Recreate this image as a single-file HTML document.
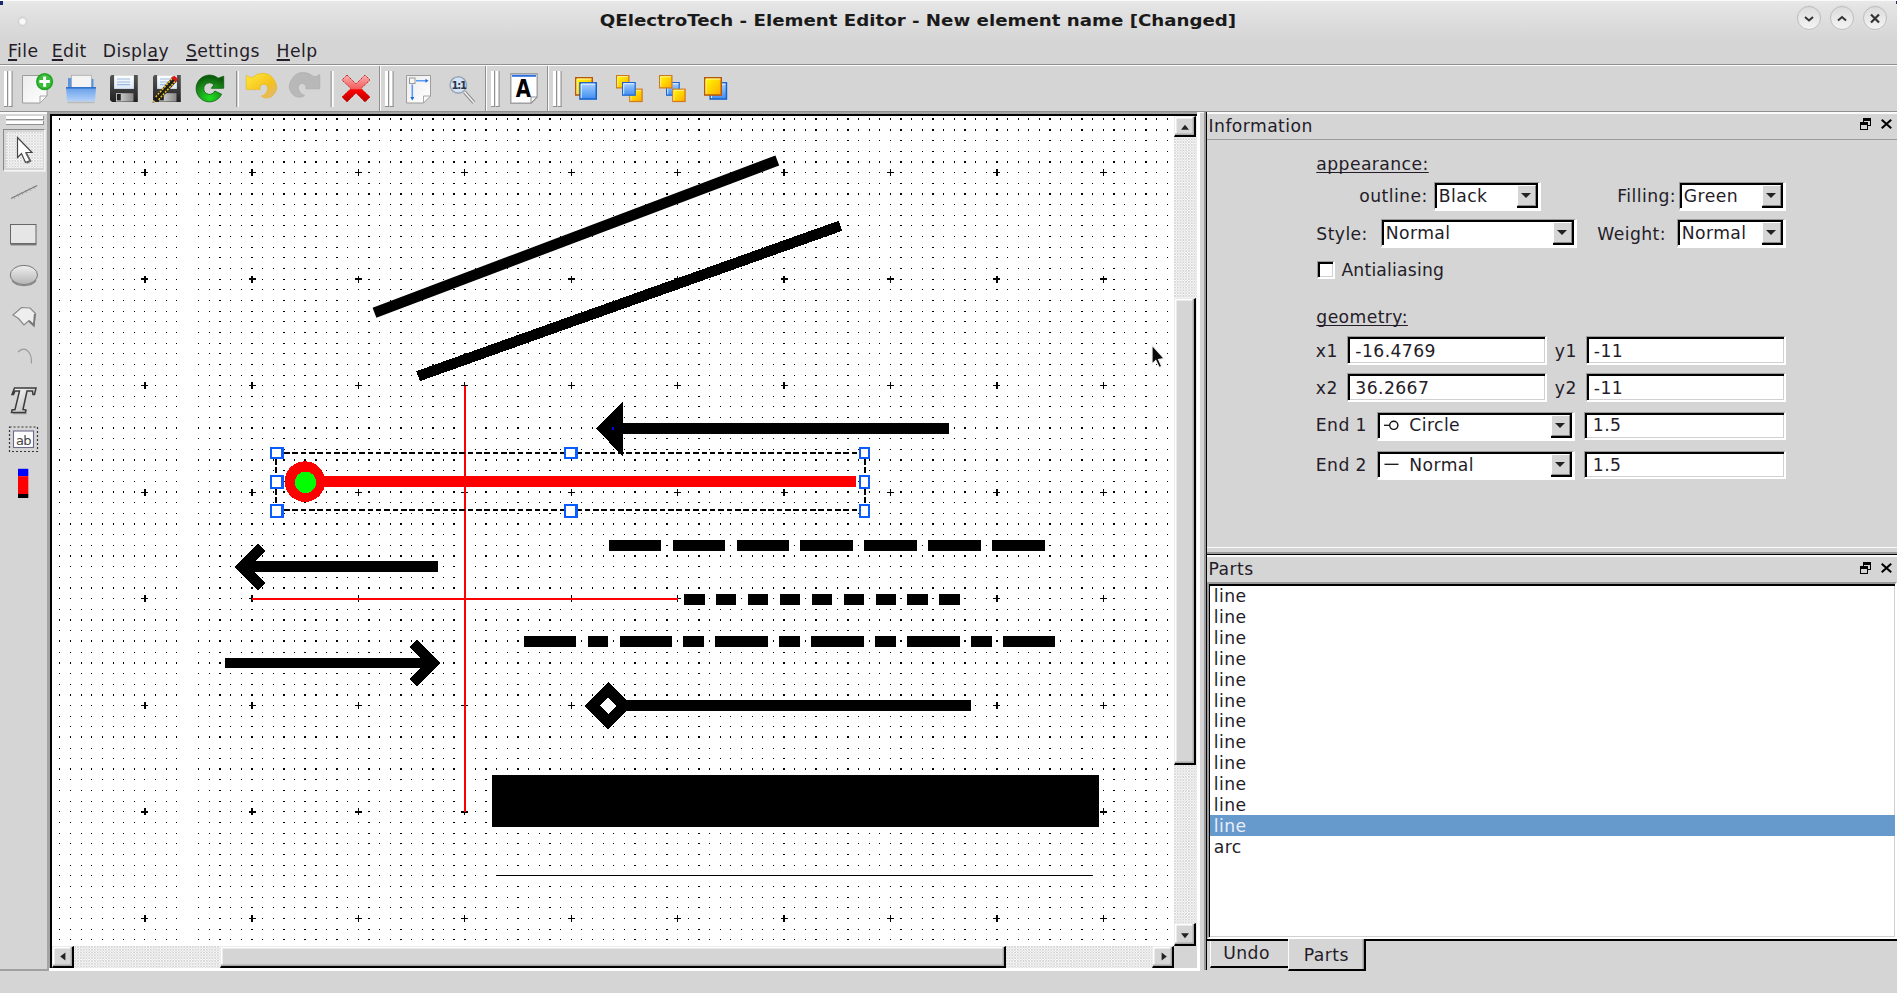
<!DOCTYPE html>
<html lang="en">
<head>
<meta charset="utf-8">
<title>QElectroTech - Element Editor - New element name [Changed]</title>
<style>
html,body{margin:0;padding:0;}
body{width:1899px;height:993px;overflow:hidden;background:#d5d5d5;position:relative;
 font-family:"DejaVu Sans","Liberation Sans",sans-serif;font-size:17.2px;letter-spacing:0.42px;color:#241c28;}
.abs{position:absolute;}
.t{position:absolute;white-space:nowrap;line-height:20px;}
u{text-decoration:underline;text-underline-offset:2.2px;text-decoration-thickness:1.7px;text-decoration-skip-ink:none;}
#titlebar{left:0;top:0;width:1899px;height:64px;background:linear-gradient(#e9e9e9 0px,#e3e3e3 8px,#d5d5d5 40px,#d5d5d5 64px);}
#title{left:0;width:1836px;top:10px;text-align:center;font-weight:bold;font-size:16.4px;letter-spacing:0;color:#1a1a1a;line-height:22px;transform:scaleX(1.11);transform-origin:918px 0;}
.wbtn{position:absolute;top:6px;width:22px;height:22px;border-radius:50%;border:1px solid #bdbdbd;background:linear-gradient(#dcdcdc,#f4f4f4);box-shadow:0 0 0 1px #dedede;}
.hline{position:absolute;height:1px;}
.vline{position:absolute;width:1px;}
.sunken{position:absolute;background:#fff;border:2px solid;border-color:#000 #e8e8e8 #e8e8e8 #000;box-shadow:-1px -1px 0 #8a8a8a, 1px 1px 0 #fff;box-sizing:border-box;}
.combo{position:absolute;background:#fff;border:2px solid;border-color:#000 #e8e8e8 #e8e8e8 #000;box-shadow:-1px -1px 0 #8a8a8a, 1px 1px 0 #fff;box-sizing:border-box;}
.cbtn{position:absolute;right:0;top:0;bottom:0;width:19px;background:#d5d5d5;border:1px solid;border-color:#fff #222 #222 #fff;box-shadow:inset -1px -1px 0 #8a8a8a;box-sizing:border-box;}
.cbtn:after{content:"";position:absolute;left:4px;top:50%;margin-top:-2px;border:5px solid transparent;border-top:5px solid #111;border-bottom:0;}
.sbtn{position:absolute;background:#d5d5d5;border:solid;border-width:1px 2px 2px 1px;border-color:#ececec #000 #000 #ececec;box-shadow:inset -1.4px -1.4px 0 #a8a8a8, inset 1.5px 1.5px 0 #fff;box-sizing:border-box;}
.checker{position:absolute;background-color:#d5d5d5;background-image:conic-gradient(#fff 25%,#d5d5d5 0 50%,#fff 0 75%,#d5d5d5 0);background-size:2.8px 2.8px;}
</style>
</head>
<body>
<div id="titlebar" class="abs"></div>
<div class="abs" style="left:20px;top:18.8px;width:5.2px;height:5.2px;border-radius:50%;background:#fafafa;box-shadow:0 0 0 1px #ececec,0 0 0 2.4px #d2d2d2;"></div>
<div class="abs" style="left:0;top:0;width:1899px;height:1px;background:#fafafa;"></div>
<div class="abs" style="left:0;top:1px;width:3px;height:4px;background:#1a2a6a;"></div><div class="abs" style="left:1896px;top:1px;width:3px;height:3px;background:#1a2a6a;"></div>
<div id="title" class="t">QElectroTech - Element Editor - New element name [Changed]</div>
<div class="wbtn" style="left:1797px;"><svg width="22" height="22" style="position:absolute;left:0;top:0"><path d="M7 10 L11 13.5 L15 10" fill="none" stroke="#333" stroke-width="2"/></svg></div>
<div class="wbtn" style="left:1830px;"><svg width="22" height="22" style="position:absolute;left:0;top:0"><path d="M7 13.5 L11 10 L15 13.5" fill="none" stroke="#333" stroke-width="2"/></svg></div>
<div class="wbtn" style="left:1863px;"><svg width="22" height="22" style="position:absolute;left:0;top:0"><path d="M7 7.5 L15 15.5 M15 7.5 L7 15.5" fill="none" stroke="#333" stroke-width="2.2"/></svg></div>
<!-- menu -->
<div class="t" style="left:8px;top:40.9px;"><u>F</u>ile</div>
<div class="t" style="left:51.8px;top:40.9px;"><u>E</u>dit</div>
<div class="t" style="left:102.8px;top:40.9px;">Displ<u>a</u>y</div>
<div class="t" style="left:186px;top:40.9px;"><u>S</u>ettings</div>
<div class="t" style="left:276.6px;top:40.9px;"><u>H</u>elp</div>
<div class="hline" style="left:0;top:64px;width:1899px;background:#8f8f8f;"></div>
<div class="hline" style="left:0;top:65px;width:1899px;background:#fbfbfb;"></div>
<div class="hline" style="left:0;top:111px;width:1899px;background:#8f8f8f;"></div>
<div class="hline" style="left:0;top:112px;width:1899px;background:#fbfbfb;"></div>
<!-- toolbar separators between toolbars -->
<div class="vline" style="left:379px;top:66px;height:45px;background:#8f8f8f;"></div><div class="vline" style="left:380px;top:66px;height:45px;background:#fbfbfb;"></div>
<div class="vline" style="left:485px;top:66px;height:45px;background:#8f8f8f;"></div><div class="vline" style="left:486px;top:66px;height:45px;background:#fbfbfb;"></div>
<div class="vline" style="left:547px;top:66px;height:45px;background:#8f8f8f;"></div><div class="vline" style="left:548px;top:66px;height:45px;background:#fbfbfb;"></div>
<svg class="abs" style="left:0;top:66px" width="760" height="45" viewBox="0 66 760 45">
<defs>
<linearGradient id="gpage" x1="0" y1="0" x2="1" y2="1"><stop offset="0" stop-color="#ececec"/><stop offset="1" stop-color="#fff"/></linearGradient>
<linearGradient id="gfold" x1="0" y1="0" x2="0" y2="1"><stop offset="0" stop-color="#2f72cf"/><stop offset="0.12" stop-color="#6ea4ec"/><stop offset="1" stop-color="#b4d2f8"/></linearGradient>
<linearGradient id="gflop" x1="0" y1="0" x2="0" y2="1"><stop offset="0" stop-color="#555"/><stop offset="1" stop-color="#222"/></linearGradient>
<linearGradient id="gmetal" x1="0" y1="0" x2="1" y2="0"><stop offset="0" stop-color="#ddd"/><stop offset="1" stop-color="#888"/></linearGradient>
<linearGradient id="glabel" x1="0" y1="0" x2="0" y2="1"><stop offset="0" stop-color="#fff"/><stop offset="1" stop-color="#dbe8f7"/></linearGradient>
<radialGradient id="ggreen" cx="0.5" cy="0.85" r="0.8"><stop offset="0" stop-color="#1fe01f"/><stop offset="0.6" stop-color="#1a8f1a"/><stop offset="1" stop-color="#0b5a0b"/></radialGradient>
<linearGradient id="gyel" x1="0" y1="0" x2="1" y2="1"><stop offset="0" stop-color="#ffff00"/><stop offset="1" stop-color="#ffa800"/></linearGradient>
<linearGradient id="gblu" x1="0" y1="0" x2="0" y2="1"><stop offset="0" stop-color="#a8d0ff"/><stop offset="1" stop-color="#3f8df0"/></linearGradient>
<linearGradient id="gred" x1="0" y1="0" x2="0" y2="1"><stop offset="0" stop-color="#f9b0b0"/><stop offset="0.5" stop-color="#f46060"/><stop offset="0.55" stop-color="#ff0000"/><stop offset="1" stop-color="#b80000"/></linearGradient>
<linearGradient id="gundo" x1="0" y1="0" x2="1" y2="1"><stop offset="0" stop-color="#ffe93a"/><stop offset="0.6" stop-color="#f4c21c"/><stop offset="1" stop-color="#e8a13a" stop-opacity="0.5"/></linearGradient>
<g id="grip"><rect x="0" y="0" width="3" height="35" fill="#fff"/><rect x="3" y="0" width="1" height="36" fill="#8f8f8f"/><rect x="0" y="35" width="4" height="1" fill="#8f8f8f"/><rect x="4.6" y="0" width="3" height="35" fill="#fff"/><rect x="7.6" y="0" width="1" height="36" fill="#8f8f8f"/><rect x="4.6" y="35" width="4" height="1" fill="#8f8f8f"/></g>
</defs>
<use href="#grip" x="4" y="71"/><use href="#grip" x="385" y="71"/><use href="#grip" x="491" y="71"/><use href="#grip" x="553" y="71"/>
<!-- new -->
<path d="M22.5 75.5H47V96L40 103H22.5z" fill="url(#gpage)" stroke="#9c9c9c" stroke-width="1"/><path d="M40 103V96H47z" fill="#f6f6f6" stroke="#a8a8a8" stroke-width="1"/>
<circle cx="44.6" cy="81.6" r="8.6" fill="#22a322"/><circle cx="44.6" cy="81.6" r="7" fill="#3bbd3b"/><path d="M39.4 81.6H49.8M44.6 76.4V86.8" stroke="#fff" stroke-width="3"/>
<!-- open -->
<path d="M68 78H72V88H68z" fill="#5b94e0"/><rect x="71.5" y="75.3" width="20" height="14" fill="#f4f4f4" stroke="#aaa" stroke-width="0.8"/><path d="M91.5 79H93.5V88H91.5z" fill="#5b94e0"/>
<path d="M66 87.3H96L95 101.5H67z" fill="url(#gfold)"/><path d="M66 87.8H96" stroke="#2a6bc8" stroke-width="1.2"/><path d="M67.5 102.5H94.5" stroke="#b9b9b9" stroke-width="1.4"/>
<!-- save -->
<g id="floppy"><path d="M111.5 75H137.8V101.9H112L110 100V76.5z" fill="url(#gflop)"/><rect x="114.1" y="75.2" width="19.8" height="13.7" fill="url(#glabel)"/><path d="M117 79H130M117 82H130M117 84.6H130" stroke="#9fbbe0" stroke-width="1.1"/><rect x="116" y="93.2" width="17.5" height="8.4" fill="url(#gmetal)"/><rect x="116.8" y="94" width="4" height="6.4" fill="#222"/></g>
<!-- save as -->
<use href="#floppy" x="43"/>
<path d="M152.5 102.8L155 96.5L173 76.5L177.5 80.5L159.5 100.5z" fill="#1c1c1c"/><path d="M155.7 97L173.3 77.3M158.6 99.7L176.3 80" stroke="#f2c21e" stroke-width="1.5" stroke-dasharray="2 1.2"/><path d="M171 77.5L174.5 75.8L177.8 78.8L176 82z" fill="#e01818"/><path d="M152.3 103L153.3 99.8L155.6 101.8z" fill="#caa34a"/>
<!-- reload -->
<path d="M221.6 94.2A13.4 13.4 0 1 1 218.1 78.2L223.7 76.2V88.3H211.3L213.9 84.8A5.8 5.8 0 1 0 214.8 91z" fill="url(#ggreen)" stroke="#0d5e0d" stroke-width="0.8"/>
<!-- separators -->
<rect x="236" y="71" width="1.5" height="36" fill="#8f8f8f"/><rect x="237.5" y="71" width="1.5" height="36" fill="#fbfbfb"/>
<rect x="330.6" y="71" width="1.2" height="36" fill="#8f8f8f"/><rect x="331.8" y="71" width="2" height="36" fill="#fbfbfb"/>
<!-- undo -->
<path id="undo" d="M246.2 75.4L250.6 77.6L254 76.5C258 72.5 267 72 271.1 76.2C275 80 277.5 86 276.7 88.2C276 93 272 97 269.5 97.5C266 98.5 263 98 261.4 96C264 95.5 267 93 267.8 89C268 85.5 265 83.5 262.5 84.5L260.1 85.7V89.6H246.2z" fill="url(#gundo)" stroke="#e6b512" stroke-width="0.6"/>
<!-- redo -->
<path d="M246.2 75.4L250.6 77.6L254 76.5C258 72.5 267 72 271.1 76.2C275 80 277.5 86 276.7 88.2C276 93 272 97 269.5 97.5C266 98.5 263 98 261.4 96C264 95.5 267 93 267.8 89C268 85.5 265 83.5 262.5 84.5L260.1 85.7V89.6H246.2z" transform="translate(566,-0.8) scale(-1,1)" fill="#b8b8b8" stroke="#a8a8a8" stroke-width="0.6"/>
<!-- delete -->
<path d="M347 75L356 84L365 75L370 80L361 88.5L370 97L365 102L356 93L347 102L342 97L351 88.5L342 80z" fill="url(#gred)" stroke="#cc1010" stroke-width="1" stroke-dasharray="1.3 0.9"/>
<!-- grid page -->
<path d="M406.5 75.5H430.5V96L423.5 103H406.5z" fill="url(#gpage)" stroke="#9c9c9c" stroke-width="1"/><path d="M423.5 103V96H430.5z" fill="#f8f8f8" stroke="#a8a8a8" stroke-width="1"/>
<rect x="409.5" y="78" width="5.5" height="5.5" fill="#f4f4f4" stroke="#9a9a9a" stroke-width="1"/><path d="M416 80.7H427M412.3 84.5V99" stroke="#5b9cf2" stroke-width="1.6"/><path d="M425.5 78.7L428.5 80.7L425.5 82.7zM410.3 97L412.3 100.5L414.3 97z" fill="#1c6be0"/>
<!-- zoom 1:1 -->
<path d="M464.5 92L473.8 102.5" stroke="#8a8a8a" stroke-width="3.6"/><path d="M464.5 92L473.8 102.5" stroke="#f0f0f0" stroke-width="1.6"/>
<circle cx="458.3" cy="84.9" r="8.2" fill="#d3e4f7" stroke="#9aa6b6" stroke-width="1.6"/>
<text x="458.6" y="88.8" font-size="10" font-weight="bold" text-anchor="middle" fill="#2a3444" font-family="DejaVu Sans, Liberation Sans, sans-serif" letter-spacing="-1.2">1:1</text>
<!-- A -->
<path d="M510.8 73.8H537.2V97L531 103.2H510.8z" fill="#fff" stroke="#a0a0a0" stroke-width="1.4"/><rect x="512" y="74.8" width="24" height="2" fill="#2e6fe0"/><path d="M531 103V97H537z" fill="#f4f4f4" stroke="#8f8f8f" stroke-width="1"/>
<text x="523.3" y="96.8" font-size="24" font-weight="bold" text-anchor="middle" fill="#000" font-family="DejaVu Sans, Liberation Sans, sans-serif" letter-spacing="0" transform="translate(523.3 0) scale(0.82 1) translate(-523.3 0)">A</text>
<!-- order icons -->
<g id="ysq"><rect x="0.75" y="0.75" width="16.5" height="17.3" fill="url(#gyel)" stroke="#b8560a" stroke-width="1.5"/><path d="M2 17V2H16.5" fill="none" stroke="#fff8c0" stroke-width="0.9"/></g>
<g id="bsq"><rect x="0.75" y="0.75" width="16.3" height="16.2" fill="url(#gblu)" stroke="#1560cc" stroke-width="1.5"/><path d="M2 16V2H16" fill="none" stroke="#fff" stroke-width="0.9"/></g>
<g id="ysm"><rect x="0.6" y="0.6" width="12.3" height="12.3" fill="url(#gyel)" stroke="#d07818" stroke-width="1.2"/><path d="M1.7 12V1.7H12" fill="none" stroke="#fff8c0" stroke-width="0.8"/></g>
<g id="bsm"><rect x="0.6" y="0.6" width="12.6" height="12.6" fill="url(#gblu)" stroke="#1c66d2" stroke-width="1.2"/><path d="M1.7 12.3V1.7H12.3" fill="none" stroke="#fff" stroke-width="0.8"/></g>
<use href="#ysq" x="575" y="77"/><use href="#bsq" x="579.2" y="82.1"/>
<use href="#ysm" x="616" y="75"/><use href="#ysm" x="629.2" y="88.6"/><use href="#bsm" x="622" y="82"/>
<use href="#bsm" x="666" y="82"/><use href="#ysm" x="659" y="75"/><use href="#ysm" x="672.2" y="88.6"/>
<use href="#bsq" x="709.4" y="82.1"/><use href="#ysq" x="704" y="77"/>
</svg>
<!-- left tool bar -->
<div class="hline" style="left:0;top:112px;width:47px;background:#fbfbfb;height:2px;"></div>
<div class="abs" style="left:6px;top:116px;width:37px;height:3px;background:#fff;border-bottom:1px solid #8f8f8f;border-right:1px solid #8f8f8f;"></div>
<div class="abs" style="left:6px;top:120.6px;width:37px;height:3px;background:#fff;border-bottom:1px solid #8f8f8f;border-right:1px solid #8f8f8f;"></div>
<div class="abs" style="left:3px;top:129px;width:42px;height:42px;box-sizing:border-box;border:1px solid;border-color:#8a8a8a #f4f4f4 #f4f4f4 #8a8a8a;box-shadow:1px 1px 0 #e9e9e9;"></div>
<div class="checker" style="left:6px;top:132px;width:37px;height:36px;"></div>
<svg class="abs" style="left:0;top:114px" width="47" height="400" viewBox="0 114 47 400">
<defs>
<linearGradient id="lgell" x1="0" y1="0" x2="0" y2="1"><stop offset="0" stop-color="#f0f0f0"/><stop offset="1" stop-color="#b4b4b4"/></linearGradient>
<linearGradient id="lgT" x1="0" y1="0" x2="1" y2="1"><stop offset="0" stop-color="#ffffff"/><stop offset="1" stop-color="#b0b0b0"/></linearGradient>
</defs>
<!-- cursor -->
<path d="M17.5 137.5V157.5L21.5 153.5L25.5 162.5L30 160.5L26 152.5H32z" fill="#fff" stroke="#444" stroke-width="1.2"/><path d="M26 153L30.5 161L27 163" fill="none" stroke="#666" stroke-width="1.6"/>
<!-- line -->
<path d="M11 198.6L37.2 185.6" stroke="#777" stroke-width="1.1"/><path d="M13 196L15 199M17 194L19 197M21 192L23 195M25 190L27 193M29 188L31 191M33 186L35 189" stroke="#999" stroke-width="0.8"/>
<!-- rect -->
<rect x="10.5" y="224.5" width="25.5" height="19" fill="#e6e6e6" stroke="#666" stroke-width="1"/><path d="M10.5 244.6H36.5" stroke="#777" stroke-width="1.6"/>
<!-- ellipse -->
<ellipse cx="23.9" cy="275" rx="13.6" ry="9.6" fill="url(#lgell)" stroke="#777" stroke-width="1"/><path d="M12 280.5C17 287 31 287 36 280.5" stroke="#8a8a8a" stroke-width="1.6" fill="none"/>
<!-- polygon -->
<path d="M13 315L21.5 307.5L30 308L35.5 313.5L34 325L29 320.5L24 325L18.5 318.5z" fill="#eee" stroke="#888" stroke-width="1.2"/><path d="M34.8 314L33.8 325.5L29 321" fill="none" stroke="#777" stroke-width="1.8"/>
<!-- arc -->
<path d="M18 352C24 346 32 350 31.5 363.5" fill="none" stroke="#999" stroke-width="1.1"/>
<!-- T -->
<path d="M14.5 388H36L34.5 394.5H33L32.5 391H27L23 409.5L26 410L25.5 412.5H11.5L12 410L15 409.5L19.5 391H15L13.5 394.5H12z" fill="url(#lgT)" stroke="#3c3c3c" stroke-width="1.5"/><path d="M13 413.6H26.5" stroke="#8a8a8a" stroke-width="1.2"/>
<!-- text field -->
<rect x="9.5" y="427" width="28" height="24.5" fill="none" stroke="#333" stroke-width="1.2" stroke-dasharray="2 2"/><rect x="13.5" y="431" width="20" height="16.5" fill="#fff" stroke="#6a6a8a" stroke-width="1.1"/>
<text x="23.5" y="444.5" font-size="13" text-anchor="middle" fill="#444" font-family="DejaVu Sans, Liberation Sans, sans-serif" letter-spacing="-0.5">ab</text>
<!-- colour -->
<rect x="18" y="468.8" width="10.3" height="7.4" fill="#00f"/><rect x="18" y="476.2" width="10.3" height="18" fill="#f00"/><rect x="18" y="494" width="10.3" height="4" fill="#000"/>
</svg>
<div class="abs" style="left:47px;top:112px;width:1150px;height:2px;background:#a4a4a4;"></div>
<div class="abs" style="left:47px;top:112px;width:3px;height:857px;background:#a4a4a4;"></div>
<div class="abs" style="left:50px;top:114px;width:1146.5px;height:2px;background:#000;"></div>
<div class="abs" style="left:50px;top:114px;width:2px;height:854px;background:#000;"></div>
<div class="abs" style="left:1196.6px;top:112px;width:3.5px;height:859px;background:#fff;"></div>
<div class="abs" style="left:49px;top:968.3px;width:1151px;height:2.5px;background:#fff;"></div>
<div class="abs" style="left:0px;top:969.2px;width:48.5px;height:1.6px;background:#a0a0a0;"></div>
<div class="abs" style="left:52px;top:116px;width:1144.6px;height:852.3px;background:#d5d5d5;"></div>
<svg class="abs" style="left:52px;top:116px;background:#fff" width="1122" height="830" viewBox="52 116 1122 830">
<path shape-rendering="crispEdges" fill="none" stroke="#000" stroke-width="1.0" stroke-dasharray="1.0 9.642" d="M59.30 140.55H188.21M59.30 151.21H188.21M59.30 172.52H188.21M59.30 183.18H188.21M59.30 204.49H188.21M59.30 215.15H188.21M59.30 225.80H188.21M59.30 236.46H188.21M59.30 247.12H188.21M59.30 257.78H188.21M59.30 268.43H188.21M59.30 279.09H188.21M59.30 289.75H188.21M59.30 300.40H188.21M59.30 311.06H188.21M59.30 321.72H188.21M59.30 332.37H188.21M59.30 343.03H188.21M59.30 353.69H188.21M59.30 364.35H188.21M59.30 375.00H188.21M59.30 385.66H188.21M59.30 396.32H188.21M59.30 406.97H188.21M59.30 417.63H188.21M59.30 438.94H188.21M59.30 449.60H188.21M59.30 470.92H188.21M59.30 481.57H188.21M59.30 502.89H188.21M59.30 513.54H188.21M59.30 534.86H188.21M59.30 545.51H188.21M59.30 566.83H188.21M59.30 577.49H188.21M59.30 598.80H188.21M59.30 609.46H188.21M59.30 630.77H188.21M59.30 652.08H188.21M59.30 673.40H188.21M59.30 684.06H188.21M59.30 705.37H188.21M59.30 716.03H188.21M59.30 726.68H188.21M59.30 748.00H188.21M59.30 758.65H188.21M59.30 779.97H188.21M59.30 790.63H188.21M59.30 801.28H188.21M59.30 811.94H188.21M59.30 822.60H188.21M59.30 833.25H188.21M59.30 843.91H188.21M59.30 854.57H188.21M59.30 865.22H188.21M59.30 875.88H188.21M59.30 886.54H188.21M59.30 897.20H188.21M59.30 907.85H188.21M59.30 918.51H188.21M59.30 929.17H188.21M59.30 939.82H188.21"/>
<path shape-rendering="crispEdges" fill="none" stroke="#000" stroke-width="2.0" stroke-dasharray="1.0 9.642" d="M59.30 119.23H188.21M59.30 129.89H188.21M59.30 161.86H188.21M59.30 193.83H188.21M59.30 428.29H188.21M59.30 460.26H188.21M59.30 492.23H188.21M59.30 524.20H188.21M59.30 556.17H188.21M59.30 588.14H188.21M59.30 620.11H188.21M59.30 641.43H188.21M59.30 662.74H188.21M59.30 694.71H188.21M59.30 737.34H188.21M59.30 769.31H188.21"/>
<path shape-rendering="crispEdges" fill="none" stroke="#000" stroke-width="1.0" stroke-dasharray="1.45 9.192" d="M198.03 140.55H476.37M198.03 151.21H476.37M198.03 172.52H476.37M198.03 183.18H476.37M198.03 204.49H476.37M198.03 215.15H476.37M198.03 225.80H476.37M198.03 236.46H476.37M198.03 247.12H476.37M198.03 257.78H476.37M198.03 268.43H476.37M198.03 279.09H476.37M198.03 289.75H476.37M198.03 300.40H476.37M198.03 311.06H476.37M198.03 321.72H476.37M198.03 332.37H476.37M198.03 343.03H476.37M198.03 353.69H476.37M198.03 364.35H476.37M198.03 375.00H476.37M198.03 385.66H476.37M198.03 396.32H476.37M198.03 406.97H476.37M198.03 417.63H476.37M198.03 438.94H476.37M198.03 449.60H476.37M198.03 470.92H476.37M198.03 481.57H476.37M198.03 502.89H476.37M198.03 513.54H476.37M198.03 534.86H476.37M198.03 545.51H476.37M198.03 566.83H476.37M198.03 577.49H476.37M198.03 598.80H476.37M198.03 609.46H476.37M198.03 630.77H476.37M198.03 652.08H476.37M198.03 673.40H476.37M198.03 684.06H476.37M198.03 705.37H476.37M198.03 716.03H476.37M198.03 726.68H476.37M198.03 748.00H476.37M198.03 758.65H476.37M198.03 779.97H476.37M198.03 790.63H476.37M198.03 801.28H476.37M198.03 811.94H476.37M198.03 822.60H476.37M198.03 833.25H476.37M198.03 843.91H476.37M198.03 854.57H476.37M198.03 865.22H476.37M198.03 875.88H476.37M198.03 886.54H476.37M198.03 897.20H476.37M198.03 907.85H476.37M198.03 918.51H476.37M198.03 929.17H476.37M198.03 939.82H476.37"/>
<path shape-rendering="crispEdges" fill="none" stroke="#000" stroke-width="2.0" stroke-dasharray="1.45 9.192" d="M198.03 119.23H476.37M198.03 129.89H476.37M198.03 161.86H476.37M198.03 193.83H476.37M198.03 428.29H476.37M198.03 460.26H476.37M198.03 492.23H476.37M198.03 524.20H476.37M198.03 556.17H476.37M198.03 588.14H476.37M198.03 620.11H476.37M198.03 641.43H476.37M198.03 662.74H476.37M198.03 694.71H476.37M198.03 737.34H476.37M198.03 769.31H476.37"/>
<path shape-rendering="crispEdges" fill="none" stroke="#000" stroke-width="1.0" stroke-dasharray="1.25 9.392" d="M485.46 140.55H1168.00M485.46 151.21H1168.00M485.46 172.52H1168.00M485.46 183.18H1168.00M485.46 204.49H1168.00M485.46 215.15H1168.00M485.46 225.80H1168.00M485.46 236.46H1168.00M485.46 247.12H1168.00M485.46 257.78H1168.00M485.46 268.43H1168.00M485.46 279.09H1168.00M485.46 289.75H1168.00M485.46 300.40H1168.00M485.46 311.06H1168.00M485.46 321.72H1168.00M485.46 332.37H1168.00M485.46 343.03H1168.00M485.46 353.69H1168.00M485.46 364.35H1168.00M485.46 375.00H1168.00M485.46 385.66H1168.00M485.46 396.32H1168.00M485.46 406.97H1168.00M485.46 417.63H1168.00M485.46 438.94H1168.00M485.46 449.60H1168.00M485.46 470.92H1168.00M485.46 481.57H1168.00M485.46 502.89H1168.00M485.46 513.54H1168.00M485.46 534.86H1168.00M485.46 545.51H1168.00M485.46 566.83H1168.00M485.46 577.49H1168.00M485.46 598.80H1168.00M485.46 609.46H1168.00M485.46 630.77H1168.00M485.46 652.08H1168.00M485.46 673.40H1168.00M485.46 684.06H1168.00M485.46 705.37H1168.00M485.46 716.03H1168.00M485.46 726.68H1168.00M485.46 748.00H1168.00M485.46 758.65H1168.00M485.46 779.97H1168.00M485.46 790.63H1168.00M485.46 801.28H1168.00M485.46 811.94H1168.00M485.46 822.60H1168.00M485.46 833.25H1168.00M485.46 843.91H1168.00M485.46 854.57H1168.00M485.46 865.22H1168.00M485.46 875.88H1168.00M485.46 886.54H1168.00M485.46 897.20H1168.00M485.46 907.85H1168.00M485.46 918.51H1168.00M485.46 929.17H1168.00M485.46 939.82H1168.00"/>
<path shape-rendering="crispEdges" fill="none" stroke="#000" stroke-width="2.0" stroke-dasharray="1.25 9.392" d="M485.46 119.23H1168.00M485.46 129.89H1168.00M485.46 161.86H1168.00M485.46 193.83H1168.00M485.46 428.29H1168.00M485.46 460.26H1168.00M485.46 492.23H1168.00M485.46 524.20H1168.00M485.46 556.17H1168.00M485.46 588.14H1168.00M485.46 620.11H1168.00M485.46 641.43H1168.00M485.46 662.74H1168.00M485.46 694.71H1168.00M485.46 737.34H1168.00M485.46 769.31H1168.00"/>
<rect x="185" y="136" width="7" height="810" fill="#fff"/>
<path shape-rendering="crispEdges" fill="none" stroke="#000" stroke-width="1.3" d="M141.4 172.5h7M144.9 169.0v7M248.5 172.5h7M252.0 169.0v7M354.9 172.5h7M358.4 169.0v7M461.3 172.5h7M464.8 169.0v7M567.7 172.5h7M571.2 169.0v7M674.1 172.5h7M677.6 169.0v7M780.6 172.5h7M784.1 169.0v7M887.0 172.5h7M890.5 169.0v7M993.4 172.5h7M996.9 169.0v7M1099.8 172.5h7M1103.3 169.0v7M141.4 279.1h7M144.9 275.6v7M248.5 279.1h7M252.0 275.6v7M354.9 279.1h7M358.4 275.6v7M461.3 279.1h7M464.8 275.6v7M567.7 279.1h7M571.2 275.6v7M674.1 279.1h7M677.6 275.6v7M780.6 279.1h7M784.1 275.6v7M887.0 279.1h7M890.5 275.6v7M993.4 279.1h7M996.9 275.6v7M1099.8 279.1h7M1103.3 275.6v7M141.4 385.7h7M144.9 382.2v7M248.5 385.7h7M252.0 382.2v7M354.9 385.7h7M358.4 382.2v7M461.3 385.7h7M464.8 382.2v7M567.7 385.7h7M571.2 382.2v7M674.1 385.7h7M677.6 382.2v7M780.6 385.7h7M784.1 382.2v7M887.0 385.7h7M890.5 382.2v7M993.4 385.7h7M996.9 382.2v7M1099.8 385.7h7M1103.3 382.2v7M141.4 492.2h7M144.9 488.7v7M248.5 492.2h7M252.0 488.7v7M354.9 492.2h7M358.4 488.7v7M461.3 492.2h7M464.8 488.7v7M567.7 492.2h7M571.2 488.7v7M674.1 492.2h7M677.6 488.7v7M780.6 492.2h7M784.1 488.7v7M887.0 492.2h7M890.5 488.7v7M993.4 492.2h7M996.9 488.7v7M1099.8 492.2h7M1103.3 488.7v7M141.4 598.8h7M144.9 595.3v7M248.5 598.8h7M252.0 595.3v7M354.9 598.8h7M358.4 595.3v7M461.3 598.8h7M464.8 595.3v7M567.7 598.8h7M571.2 595.3v7M674.1 598.8h7M677.6 595.3v7M780.6 598.8h7M784.1 595.3v7M887.0 598.8h7M890.5 595.3v7M993.4 598.8h7M996.9 595.3v7M1099.8 598.8h7M1103.3 595.3v7M141.4 705.4h7M144.9 701.9v7M248.5 705.4h7M252.0 701.9v7M354.9 705.4h7M358.4 701.9v7M461.3 705.4h7M464.8 701.9v7M567.7 705.4h7M571.2 701.9v7M674.1 705.4h7M677.6 701.9v7M780.6 705.4h7M784.1 701.9v7M887.0 705.4h7M890.5 701.9v7M993.4 705.4h7M996.9 701.9v7M1099.8 705.4h7M1103.3 701.9v7M141.4 811.9h7M144.9 808.4v7M248.5 811.9h7M252.0 808.4v7M354.9 811.9h7M358.4 808.4v7M461.3 811.9h7M464.8 808.4v7M567.7 811.9h7M571.2 808.4v7M674.1 811.9h7M677.6 808.4v7M780.6 811.9h7M784.1 808.4v7M887.0 811.9h7M890.5 808.4v7M993.4 811.9h7M996.9 808.4v7M1099.8 811.9h7M1103.3 808.4v7M141.4 918.5h7M144.9 915.0v7M248.5 918.5h7M252.0 915.0v7M354.9 918.5h7M358.4 915.0v7M461.3 918.5h7M464.8 915.0v7M567.7 918.5h7M571.2 915.0v7M674.1 918.5h7M677.6 915.0v7M780.6 918.5h7M784.1 915.0v7M887.0 918.5h7M890.5 915.0v7M993.4 918.5h7M996.9 915.0v7M1099.8 918.5h7M1103.3 915.0v7"/>
<path shape-rendering="crispEdges" stroke="#f00" stroke-width="2" d="M464.8 386V812"/>
<rect shape-rendering="crispEdges" fill="#f00" x="252" y="597.8" width="425.5" height="2"/>
<line x1="374.5" y1="312.8" x2="777.3" y2="160.4" stroke="#000" stroke-width="10.65"/>
<line shape-rendering="crispEdges" x1="418.1" y1="376.2" x2="840.4" y2="225.8" stroke="#000" stroke-width="10.65"/>
<g shape-rendering="crispEdges"><rect x="620" y="423.3" width="328.7" height="10.65"/><path d="M596 428.7L623.4 401.2V456.7z"/><rect x="611.5" y="427.3" width="2" height="3" fill="#00f"/></g>
<g shape-rendering="crispEdges"><rect x="305" y="476.3" width="550.8" height="10.65" fill="#f00"/><circle cx="304.9" cy="481.6" r="20.3" fill="#f00"/><circle cx="305.5" cy="482.4" r="10.7" fill="#0f0"/></g>
<g shape-rendering="crispEdges"><rect x="608.7" y="540.3" width="52.6" height="10.65"/><rect x="672.6" y="540.3" width="52.6" height="10.65"/><rect x="736.5" y="540.3" width="52.6" height="10.65"/><rect x="800.4" y="540.3" width="52.6" height="10.65"/><rect x="864.3" y="540.3" width="52.6" height="10.65"/><rect x="928.2" y="540.3" width="52.6" height="10.65"/><rect x="992.1" y="540.3" width="52.6" height="10.65"/></g>
<g shape-rendering="crispEdges"><rect x="683.9" y="593.9" width="20.6" height="10.65"/><rect x="715.8" y="593.9" width="20.6" height="10.65"/><rect x="747.8" y="593.9" width="20.6" height="10.65"/><rect x="779.7" y="593.9" width="20.6" height="10.65"/><rect x="811.6" y="593.9" width="20.6" height="10.65"/><rect x="843.5" y="593.9" width="20.6" height="10.65"/><rect x="875.5" y="593.9" width="20.6" height="10.65"/><rect x="907.4" y="593.9" width="20.6" height="10.65"/><rect x="939.3" y="593.9" width="20.6" height="10.65"/></g>
<g shape-rendering="crispEdges"><rect x="523.7" y="636.4" width="52.6" height="10.65"/><rect x="587.6" y="636.4" width="20.6" height="10.65"/><rect x="619.5" y="636.4" width="52.6" height="10.65"/><rect x="683.4" y="636.4" width="20.6" height="10.65"/><rect x="715.4" y="636.4" width="52.6" height="10.65"/><rect x="779.3" y="636.4" width="20.6" height="10.65"/><rect x="811.2" y="636.4" width="52.6" height="10.65"/><rect x="875.1" y="636.4" width="20.6" height="10.65"/><rect x="907.0" y="636.4" width="52.6" height="10.65"/><rect x="970.9" y="636.4" width="20.6" height="10.65"/><rect x="1002.8" y="636.4" width="52.6" height="10.65"/></g>
<g shape-rendering="crispEdges" fill="none" stroke="#000" stroke-width="10.65"><path d="M242.2 566.8H437.6"/><path stroke-linecap="square" stroke-linejoin="miter" d="M258.2 550.8L242.2 566.8L258.2 582.8"/></g>
<g shape-rendering="crispEdges" fill="none" stroke="#000" stroke-width="10.65"><path d="M225.1 662.9H432.8"/><path stroke-linecap="square" stroke-linejoin="miter" d="M416.8 646.9L432.8 662.9L416.8 678.9"/></g>
<g shape-rendering="crispEdges" stroke="#000" stroke-width="10.65"><path d="M624.4 705.6H970.5" fill="none"/><path fill="#fff" stroke-linejoin="miter" d="M592.4 705.9L608.4 689.9L624.4 705.9L608.4 721.9z"/></g>
<rect shape-rendering="crispEdges" x="491.9" y="775.4" width="606.6" height="51.6"/>
<rect shape-rendering="crispEdges" x="495.8" y="874.8" width="597" height="1.2"/>
<g shape-rendering="crispEdges" fill="none" stroke="#000" stroke-width="2" stroke-dasharray="5.6 2.75"><path d="M284 453H859M284 510H859M276.2 459V475M276.2 489V504M864.6 459V475M864.6 489V504"/></g>
<g shape-rendering="crispEdges"><rect x="270" y="447" width="14.0" height="12.0" fill="#0a5cff"/><rect x="272" y="449.4" width="9.4" height="7.2" fill="#fff"/><rect x="270" y="504" width="14.0" height="14.0" fill="#0a5cff"/><rect x="272" y="506.4" width="9.4" height="9.2" fill="#fff"/><rect x="564.4" y="447" width="13.3" height="12.0" fill="#0a5cff"/><rect x="566.4" y="449.4" width="8.7" height="7.2" fill="#fff"/><rect x="564.4" y="504" width="13.3" height="14.0" fill="#0a5cff"/><rect x="566.4" y="506.4" width="8.7" height="9.2" fill="#fff"/><rect x="859.3" y="447" width="11.0" height="12.0" fill="#0a5cff"/><rect x="861.3" y="449.4" width="6.4" height="7.2" fill="#fff"/><rect x="859.3" y="504" width="11.0" height="14.0" fill="#0a5cff"/><rect x="861.3" y="506.4" width="6.4" height="9.2" fill="#fff"/><rect x="270" y="475" width="14.0" height="14.0" fill="#0a5cff"/><rect x="272" y="477.4" width="9.4" height="9.2" fill="#fff"/><rect x="859.3" y="475" width="11.0" height="14.0" fill="#0a5cff"/><rect x="861.3" y="477.4" width="6.4" height="9.2" fill="#fff"/></g>
<path d="M1152 345V364.2L1155.8 360.6L1159.2 367.6L1161.8 366.4L1158.6 359.5L1164.2 358.6z" fill="#0a0a0a" stroke="#f4f4f4" stroke-width="1.2"/>
</svg>
<div class="checker" style="left:1174px;top:116px;width:22.5px;height:830px;"></div>
<div class="sbtn" style="left:1174px;top:115.5px;width:22px;height:21.5px;"><svg width="22" height="21" class="abs" style="left:-1px;top:0"><path d="M7 12.8H15L11 7.8z" fill="#222"/></svg></div>
<div class="sbtn" style="left:1174px;top:298px;width:22px;height:467px;"></div>
<div class="sbtn" style="left:1174px;top:923px;width:22px;height:23px;"><svg width="22" height="22" class="abs" style="left:-1px;top:0"><path d="M7 9.2H15L11 14.2z" fill="#222"/></svg></div>
<div class="checker" style="left:52px;top:946px;width:1122px;height:22.3px;"></div>
<div class="sbtn" style="left:52px;top:946px;width:22px;height:22px;"><svg width="22" height="22" class="abs" style="left:-1px;top:-1px"><path d="M13.4 6.4V14.4L8.2 10.4z" fill="#222"/></svg></div>
<div class="sbtn" style="left:220px;top:946px;width:786px;height:22px;"></div>
<div class="sbtn" style="left:1152px;top:946px;width:22px;height:22px;"><svg width="22" height="22" class="abs" style="left:-1px;top:-1px"><path d="M9.6 6.4V14.4L14.8 10.4z" fill="#222"/></svg></div>
<style>
.sunk{position:absolute;background:#fff;box-sizing:border-box;border:solid;border-width:1px 3px 3px 1px;border-color:#9a9a9a #fff #fff #9a9a9a;box-shadow:inset 2px 2px 0 #000;}
.edit{position:absolute;background:#fff;box-sizing:border-box;border:solid;border-width:1px 2px 2px 1px;border-color:#9a9a9a #fff #fff #9a9a9a;box-shadow:inset 2px 2px 0 #000, inset -1px -1px 0 #d0d0d0;}
.cb{position:absolute;right:2px;top:2px;bottom:2px;width:19.5px;background:#d5d5d5;box-sizing:border-box;border:1px solid;border-color:#fff #8a8a8a #8a8a8a #fff;box-shadow:2px 2px 0 0 #000, 2px 0 0 0 #000, 0 2px 0 0 #000;}
.cb:after{content:"";position:absolute;left:3.6px;top:50%;margin-top:-2.2px;border:5.2px solid transparent;border-top:5.4px solid #222;border-bottom:0;}
.r{position:absolute;white-space:nowrap;line-height:20px;color:#241c28;}
.r u{text-decoration-thickness:1.1px;text-underline-offset:2.2px;text-decoration-skip-ink:none;}
</style>
<div class="abs" style="left:1204px;top:112px;width:2px;height:858px;background:#9a9a9a;"></div>
<div class="abs" style="left:1206px;top:112px;width:1px;height:858px;background:#000;"></div>
<div class="abs" style="left:1207px;top:112px;width:692px;height:2px;background:#fbfbfb;"></div>
<div class="r" style="left:1208.6px;top:115.5px;">Information</div>
<div class="abs" style="left:1207px;top:138.8px;width:690px;height:1.2px;background:#9a9a9a;"></div>
<svg class="abs" style="left:1858px;top:118px" width="38" height="14" shape-rendering="crispEdges"><rect x="5.2" y="0.1" width="7.8" height="7.6" fill="#000"/><rect x="6.2" y="3.2" width="5.8" height="3.5" fill="#d5d5d5"/><rect x="2" y="4.1" width="8" height="7.9" fill="#000"/><rect x="3" y="7.2" width="6" height="3.8" fill="#d5d5d5"/></svg>
<svg class="abs" style="left:1858px;top:118px" width="38" height="14"><path d="M23.7 1.8L33.2 10.2M33.2 1.8L23.7 10.2" stroke="#000" stroke-width="2.1"/></svg>
<div class="r" style="left:1316.3px;top:153.6px;"><u>appearance:</u></div>
<div class="r" style="left:1359.3px;top:186.4px;">outline:</div>
<div class="sunk" style="left:1434px;top:182px;width:107.0px;height:29.0px;"><div class="cb"></div></div>
<div class="r" style="left:1438.8px;top:185.7px;">Black</div>
<div class="r" style="left:1617.3px;top:186.4px;">Filling:</div>
<div class="sunk" style="left:1679px;top:182px;width:107.0px;height:29.0px;"><div class="cb"></div></div>
<div class="r" style="left:1683.8px;top:185.7px;">Green</div>
<div class="r" style="left:1316.3px;top:223.8px;">Style:</div>
<div class="sunk" style="left:1381px;top:219px;width:196.0px;height:29.0px;"><div class="cb"></div></div>
<div class="r" style="left:1385.8px;top:223.2px;">Normal</div>
<div class="r" style="left:1597.3px;top:223.8px;">Weight:</div>
<div class="sunk" style="left:1677px;top:219px;width:109.0px;height:29.0px;"><div class="cb"></div></div>
<div class="r" style="left:1681.8px;top:223.2px;">Normal</div>
<div class="abs" style="left:1317px;top:261.3px;width:18px;height:17.4px;box-sizing:border-box;background:#fff;border:solid;border-width:1px 2px 2px 1px;border-color:#9a9a9a #fff #fff #9a9a9a;box-shadow:inset 2px 2px 0 #000, inset -1px -1px 0 #d0d0d0;"></div>
<div class="r" style="left:1341.4px;top:260.4px;letter-spacing:0.2px;">Antialiasing</div>
<div class="r" style="left:1316.3px;top:306.7px;"><u>geometry:</u></div>
<div class="r" style="left:1315.8px;top:340.8px;">x1</div>
<div class="edit" style="left:1347px;top:336px;width:200.0px;height:28.5px;"></div>
<div class="r" style="left:1355.3px;top:340.6px;">-16.4769</div>
<div class="r" style="left:1554.8px;top:340.8px;">y1</div>
<div class="edit" style="left:1586px;top:336px;width:200.0px;height:28.5px;"></div>
<div class="r" style="left:1593.8px;top:340.6px;">-11</div>
<div class="r" style="left:1315.8px;top:378.0px;">x2</div>
<div class="edit" style="left:1347px;top:373px;width:200.0px;height:28.5px;"></div>
<div class="r" style="left:1355.3px;top:377.6px;">36.2667</div>
<div class="r" style="left:1554.8px;top:378.0px;">y2</div>
<div class="edit" style="left:1586px;top:373px;width:200.0px;height:28.5px;"></div>
<div class="r" style="left:1593.8px;top:377.6px;">-11</div>
<div class="r" style="left:1315.8px;top:415.4px;">End 1</div>
<div class="sunk" style="left:1377px;top:411.5px;width:198.0px;height:29.0px;"><div class="cb"></div></div>
<div class="r" style="left:1409.3px;top:415.4px;">Circle</div>
<div class="edit" style="left:1584px;top:411.5px;width:202.0px;height:28.5px;"></div>
<svg class="abs" style="left:1383px;top:419px" width="18" height="13"><path d="M1 6.3H6.5" stroke="#111" stroke-width="1.3"/><circle cx="10.8" cy="6.3" r="4.1" fill="#fff" stroke="#111" stroke-width="1.4"/></svg>
<div class="r" style="left:1592.8px;top:415.4px;">1.5</div>
<div class="r" style="left:1315.8px;top:454.9px;">End 2</div>
<div class="sunk" style="left:1377px;top:450.5px;width:198.0px;height:29.0px;"><div class="cb"></div></div>
<div class="r" style="left:1409.3px;top:454.9px;">Normal</div>
<div class="edit" style="left:1584px;top:450.5px;width:202.0px;height:28.5px;"></div>
<svg class="abs" style="left:1383px;top:458px" width="18" height="13"><path d="M1.5 6.3H15.5" stroke="#111" stroke-width="1.3"/></svg>
<div class="r" style="left:1592.8px;top:454.9px;">1.5</div>
<div class="abs" style="left:1207px;top:547px;width:692px;height:1.3px;background:#fbfbfb;"></div>
<div class="abs" style="left:1207px;top:552px;width:692px;height:1.7px;background:#9a9a9a;"></div>
<div class="abs" style="left:1207px;top:553.7px;width:692px;height:1.2px;background:#000;"></div>
<div class="abs" style="left:1207px;top:555px;width:692px;height:2px;background:#fbfbfb;"></div>
<div class="r" style="left:1208.6px;top:559.1px;">Parts</div>
<svg class="abs" style="left:1858px;top:561.5px" width="38" height="14" shape-rendering="crispEdges"><rect x="5.2" y="0.1" width="7.8" height="7.6" fill="#000"/><rect x="6.2" y="3.2" width="5.8" height="3.5" fill="#d5d5d5"/><rect x="2" y="4.1" width="8" height="7.9" fill="#000"/><rect x="3" y="7.2" width="6" height="3.8" fill="#d5d5d5"/></svg>
<svg class="abs" style="left:1858px;top:561.5px" width="38" height="14"><path d="M23.7 1.8L33.2 10.2M33.2 1.8L23.7 10.2" stroke="#000" stroke-width="2.1"/></svg>
<div class="abs" style="left:1207px;top:582px;width:690px;height:357.2px;box-sizing:border-box;background:#fff;border:solid;border-width:2px 2px 2px 2px;border-color:#9a9a9a #fff #fff #9a9a9a;box-shadow:inset 1px 2px 0 #000, inset -1px -1px 0 #d0d0d0;"></div>
<div class="r" style="left:1213.8px;top:586.0px;">line</div>
<div class="r" style="left:1213.8px;top:606.9px;">line</div>
<div class="r" style="left:1213.8px;top:627.8px;">line</div>
<div class="r" style="left:1213.8px;top:648.7px;">line</div>
<div class="r" style="left:1213.8px;top:669.6px;">line</div>
<div class="r" style="left:1213.8px;top:690.5px;">line</div>
<div class="r" style="left:1213.8px;top:711.4px;">line</div>
<div class="r" style="left:1213.8px;top:732.3px;">line</div>
<div class="r" style="left:1213.8px;top:753.2px;">line</div>
<div class="r" style="left:1213.8px;top:774.1px;">line</div>
<div class="r" style="left:1213.8px;top:795.0px;">line</div>
<div class="abs" style="left:1210px;top:815.4px;width:685px;height:20.4px;background:#6699cc;"></div>
<div class="r" style="left:1213.8px;top:815.9px;color:#e8eef8;">line</div>
<div class="r" style="left:1213.8px;top:836.8px;">arc</div>
<div class="abs" style="left:1207px;top:939.2px;width:690px;height:2.1px;background:#000;"></div>
<div class="abs" style="left:1210px;top:941.3px;width:78px;height:26.4px;box-sizing:border-box;border:solid;border-width:0 0 2.2px 1.4px;border-color:#000 #8a8a8a #000 #fbfbfb;background:#d5d5d5;"></div>
<div class="abs" style="left:1288px;top:939.2px;width:78.4px;height:31.6px;box-sizing:border-box;border:solid;border-width:0 2.2px 2.1px 1.5px;border-color:#000 #000 #000 #fbfbfb;background:#d5d5d5;box-shadow:inset -1.4px 0 0 #9a9a9a;"></div>
<div class="r" style="left:1223.3px;top:943.2px;">Undo</div>
<div class="r" style="left:1303.8px;top:945.0px;">Parts</div>
<div class="abs" style="left:1897px;top:0;width:2px;height:993px;background:#fdfdfd;"></div>
</body>
</html>
